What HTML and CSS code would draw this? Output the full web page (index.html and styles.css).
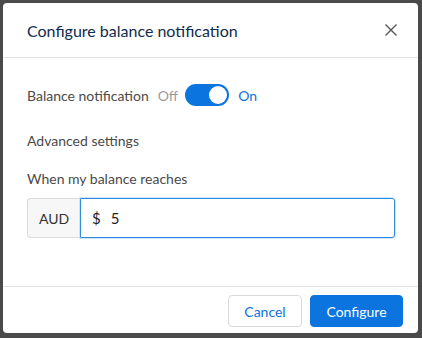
FILE: index.html
```html
<!DOCTYPE html>
<html lang="en">
<head>
    <meta charset="UTF-8">
    <meta name="viewport" content="width=device-width, initial-scale=1.0">
    <title>Configure balance notification</title>
    <link rel="stylesheet" href="styles.css">
</head>
<body>
    <div class="modal">
        <div class="modal-header">
            <h1 class="modal-title">Configure balance notification</h1>
            <button class="close" aria-label="Close">
                <svg width="12" height="12" viewBox="0 0 12 12">
                    <path d="M0.5 0.5 L11.5 11.5 M11.5 0.5 L0.5 11.5" stroke="#555" stroke-width="1.4" fill="none"/>
                </svg>
            </button>
        </div>
        <div class="modal-body">
            <div class="toggle-row">
                <span class="label">Balance notification</span>
                <span class="off">Off</span>
                <span class="switch"><span class="knob"></span></span>
                <span class="on">On</span>
            </div>
            <div class="section-title">Advanced settings</div>
            <div class="field-label">When my balance reaches</div>
            <div class="input-group">
                <span class="addon">AUD</span>
                <div class="input">
                    <span class="currency">$</span>
                    <span class="value">5</span>
                </div>
            </div>
        </div>
        <div class="modal-footer">
            <button class="btn btn-cancel">Cancel</button>
            <button class="btn btn-primary">Configure</button>
        </div>
    </div>
</body>
</html>
```

FILE: styles.css
```css
body {
    margin: 0;
    padding: 3px;
    background-color: #4a4a4a; /* dark overlay behind the modal */
    font-family: Lato, "Open Sans", sans-serif;
}

.modal {
    width: 415px;
    height: 330px;
    background-color: #fff;
    border-radius: 4px;
    display: flex;
    flex-direction: column;
}

.modal-header {
    height: 55px;
    box-sizing: border-box;
    border-bottom: 1px solid #e3e3e3;
    display: flex;
    align-items: center;
    justify-content: space-between;
    padding: 0 21px 0 24px;
}

.modal-title {
    margin: 0;
    font-size: 16px;
    font-weight: 400;
    color: #0f2b4b;
}

.close {
    background: none;
    border: none;
    padding: 0;
    width: 12px;
    height: 12px;
    display: flex;
}

.modal-body {
    flex: 1;
    padding: 25px 23px 0 24px;
    color: #4a4a4a;
    font-size: 14px;
}

.toggle-row {
    display: flex;
    align-items: center;
    height: 24px;
}

.label {
    margin-right: 9px;
}

.off {
    color: #9b9b9b;
}

.switch {
    width: 44px;
    height: 22px;
    border-radius: 11px;
    background-color: #0b74de;
    margin: 0 9px 0 7px;
    display: flex;
    align-items: center;
    justify-content: flex-end;
    padding: 0 2px;
    box-sizing: border-box;
}

.knob {
    width: 18px;
    height: 18px;
    border-radius: 50%;
    background-color: #fff;
}

.on {
    color: #0b74de;
}

.section-title {
    margin-top: 24px;
    line-height: 20px;
}

.field-label {
    margin-top: 18px;
    line-height: 20px;
}

.input-group {
    display: flex;
    margin-top: 9px;
    height: 40px;
}

.addon {
    width: 53px;
    box-sizing: border-box;
    background-color: #f7f7f7;
    border: 1px solid #dcdcdc;
    border-right: none;
    border-radius: 4px 0 0 4px;
    display: flex;
    align-items: center;
    justify-content: center;
    color: #333;
}

.input {
    flex: 1;
    border: 1px solid #2d8be0;
    border-radius: 0 3px 3px 0;
    box-shadow: 0 0 0 1px #cfe4f8;
    display: flex;
    align-items: center;
    padding-left: 11px;
    color: #222;
    font-size: 15px;
}

.currency {
    margin-right: 10px;
}

.modal-footer {
    height: 47px;
    box-sizing: border-box;
    border-top: 1px solid #e3e3e3;
    display: flex;
    justify-content: flex-end;
    align-items: flex-start;
    padding: 8px 15px 0 0;
    gap: 8px;
}

.btn {
    height: 32px;
    border-radius: 4px;
    font-family: Lato, "Open Sans", sans-serif;
    font-size: 14px;
    cursor: pointer;
}

.btn-cancel {
    width: 74px;
    background-color: #fff;
    border: 1px solid #d9d9d9;
    color: #0b74de;
}

.btn-primary {
    width: 93px;
    background-color: #0b74de;
    border: 1px solid #0b74de;
    color: #fff;
}
```
